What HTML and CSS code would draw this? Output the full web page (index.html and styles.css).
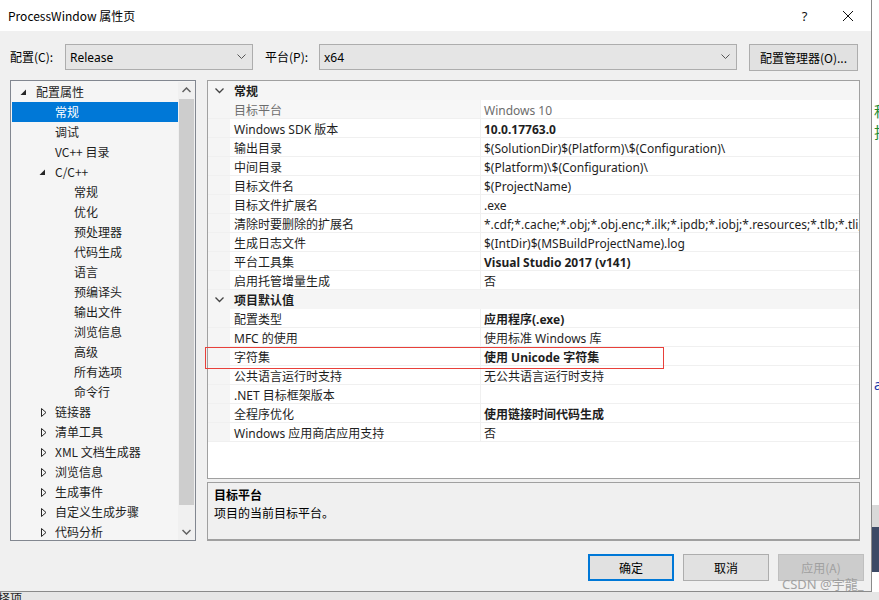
FILE: index.html
```html
<!DOCTYPE html>
<html lang="zh-CN">
<head>
<meta charset="utf-8">
<title>ProcessWindow 属性页</title>
<link rel="stylesheet" href="styles.css">
</head>
<body>
<div class="screen">
  <div class="backdrop">
    <span class="bg-green g1">程</span>
    <span class="bg-green g2">担</span>
    <span class="bg-blue b1">an</span>
    <div class="bg-band band-gray"></div>
    <div class="bg-band band-navy"></div>
    <div class="bg-bottom"><span class="bg-bottom-text">择项</span></div>
  </div>

  <div class="dialog">
    <div class="titlebar">
      <span class="title">ProcessWindow 属性页</span>
      <span class="title-btn help">?</span>
      <span class="title-btn close">
        <svg width="12" height="12" viewBox="0 0 12 12"><path d="M1 1 L11 11 M11 1 L1 11" stroke="#111" stroke-width="1" fill="none"/></svg>
      </span>
    </div>

    <div class="toolbar">
      <span class="lbl lbl-config">配置(C):</span>
      <div class="combo combo-config"><span>Release</span>
        <svg class="combo-arrow" width="9" height="6" viewBox="0 0 9 6"><path d="M0.5 0.5 L4.5 4.5 L8.5 0.5" stroke="#555" fill="none"/></svg>
      </div>
      <span class="lbl lbl-platform">平台(P):</span>
      <div class="combo combo-platform"><span>x64</span>
        <svg class="combo-arrow" width="9" height="6" viewBox="0 0 9 6"><path d="M0.5 0.5 L4.5 4.5 L8.5 0.5" stroke="#555" fill="none"/></svg>
      </div>
      <div class="btn btn-manager">配置管理器(O)...</div>
    </div>

    <div class="main">
      <div class="tree">
        <div class="tree-rows">
          <div class="trow l0"><svg class="exp" width="7" height="7" viewBox="0 0 7 7"><polygon points="6,0.5 6,6 0.5,6" fill="#262626"/></svg>配置属性</div>
          <div class="trow l1 sel">常规</div>
          <div class="trow l1">调试</div>
          <div class="trow l1">VC++ 目录</div>
          <div class="trow l1"><svg class="exp" width="7" height="7" viewBox="0 0 7 7"><polygon points="6,0.5 6,6 0.5,6" fill="#262626"/></svg>C/C++</div>
          <div class="trow l2">常规</div>
          <div class="trow l2">优化</div>
          <div class="trow l2">预处理器</div>
          <div class="trow l2">代码生成</div>
          <div class="trow l2">语言</div>
          <div class="trow l2">预编译头</div>
          <div class="trow l2">输出文件</div>
          <div class="trow l2">浏览信息</div>
          <div class="trow l2">高级</div>
          <div class="trow l2">所有选项</div>
          <div class="trow l2">命令行</div>
          <div class="trow l1"><svg class="col" width="6" height="9" viewBox="0 0 6 9"><polygon points="0.5,0.5 5,4.5 0.5,8.5" fill="none" stroke="#262626"/></svg>链接器</div>
          <div class="trow l1"><svg class="col" width="6" height="9" viewBox="0 0 6 9"><polygon points="0.5,0.5 5,4.5 0.5,8.5" fill="none" stroke="#262626"/></svg>清单工具</div>
          <div class="trow l1"><svg class="col" width="6" height="9" viewBox="0 0 6 9"><polygon points="0.5,0.5 5,4.5 0.5,8.5" fill="none" stroke="#262626"/></svg>XML 文档生成器</div>
          <div class="trow l1"><svg class="col" width="6" height="9" viewBox="0 0 6 9"><polygon points="0.5,0.5 5,4.5 0.5,8.5" fill="none" stroke="#262626"/></svg>浏览信息</div>
          <div class="trow l1"><svg class="col" width="6" height="9" viewBox="0 0 6 9"><polygon points="0.5,0.5 5,4.5 0.5,8.5" fill="none" stroke="#262626"/></svg>生成事件</div>
          <div class="trow l1"><svg class="col" width="6" height="9" viewBox="0 0 6 9"><polygon points="0.5,0.5 5,4.5 0.5,8.5" fill="none" stroke="#262626"/></svg>自定义生成步骤</div>
          <div class="trow l1"><svg class="col" width="6" height="9" viewBox="0 0 6 9"><polygon points="0.5,0.5 5,4.5 0.5,8.5" fill="none" stroke="#262626"/></svg>代码分析</div>
        </div>
        <div class="vscroll">
          <div class="sarrow"><svg width="9" height="6" viewBox="0 0 9 6"><path d="M0.5 5 L4.5 1 L8.5 5" stroke="#606060" stroke-width="1.5" fill="none"/></svg></div>
          <div class="strack"><div class="sthumb"></div></div>
          <div class="sarrow"><svg width="9" height="6" viewBox="0 0 9 6"><path d="M0.5 1 L4.5 5 L8.5 1" stroke="#606060" stroke-width="1.5" fill="none"/></svg></div>
        </div>
      </div>

      <div class="right">
        <div class="grid">
          <div class="grow head"><div class="gut"><svg width="9" height="6" viewBox="0 0 9 6"><path d="M0.5 0.5 L4.5 4.5 L8.5 0.5" stroke="#444" stroke-width="1.3" fill="none"/></svg></div><div class="hname">常规</div></div>
          <div class="grow ro"><div class="gut"></div><div class="name">目标平台</div><div class="val">Windows 10</div></div>
          <div class="grow"><div class="gut"></div><div class="name">Windows SDK 版本</div><div class="val b">10.0.17763.0</div></div>
          <div class="grow"><div class="gut"></div><div class="name">输出目录</div><div class="val">$(SolutionDir)$(Platform)\$(Configuration)\</div></div>
          <div class="grow"><div class="gut"></div><div class="name">中间目录</div><div class="val">$(Platform)\$(Configuration)\</div></div>
          <div class="grow"><div class="gut"></div><div class="name">目标文件名</div><div class="val">$(ProjectName)</div></div>
          <div class="grow"><div class="gut"></div><div class="name">目标文件扩展名</div><div class="val">.exe</div></div>
          <div class="grow"><div class="gut"></div><div class="name">清除时要删除的扩展名</div><div class="val">*.cdf;*.cache;*.obj;*.obj.enc;*.ilk;*.ipdb;*.iobj;*.resources;*.tlb;*.tli;*.tlh;*.tmp;*.rsp</div></div>
          <div class="grow"><div class="gut"></div><div class="name">生成日志文件</div><div class="val">$(IntDir)$(MSBuildProjectName).log</div></div>
          <div class="grow"><div class="gut"></div><div class="name">平台工具集</div><div class="val b">Visual Studio 2017 (v141)</div></div>
          <div class="grow"><div class="gut"></div><div class="name">启用托管增量生成</div><div class="val">否</div></div>
          <div class="grow head"><div class="gut"><svg width="9" height="6" viewBox="0 0 9 6"><path d="M0.5 0.5 L4.5 4.5 L8.5 0.5" stroke="#444" stroke-width="1.3" fill="none"/></svg></div><div class="hname">项目默认值</div></div>
          <div class="grow"><div class="gut"></div><div class="name">配置类型</div><div class="val b">应用程序(.exe)</div></div>
          <div class="grow"><div class="gut"></div><div class="name">MFC 的使用</div><div class="val">使用标准 Windows 库</div></div>
          <div class="grow"><div class="gut"></div><div class="name">字符集</div><div class="val b">使用 Unicode 字符集</div></div>
          <div class="grow"><div class="gut"></div><div class="name">公共语言运行时支持</div><div class="val">无公共语言运行时支持</div></div>
          <div class="grow"><div class="gut"></div><div class="name">.NET 目标框架版本</div><div class="val"></div></div>
          <div class="grow"><div class="gut"></div><div class="name">全程序优化</div><div class="val b">使用链接时间代码生成</div></div>
          <div class="grow"><div class="gut"></div><div class="name">Windows 应用商店应用支持</div><div class="val">否</div></div>
        </div>
        <div class="desc">
          <div class="desc-title">目标平台</div>
          <div class="desc-text">项目的当前目标平台。</div>
        </div>
      </div>
    </div>

    <div class="footer">
      <div class="btn fbtn ok">确定</div>
      <div class="btn fbtn">取消</div>
      <div class="btn fbtn disabled">应用(A)</div>
    </div>
  </div>

  <div class="highlight"></div>
  <div class="watermark">CSDN @宇龍_</div>
</div>
</body>
</html>
```

FILE: styles.css
```css
* { box-sizing: border-box; }
html, body { margin: 0; padding: 0; }
body {
  background: #ffffff;
  font-family: "Noto Sans", "Noto Sans CJK SC", sans-serif;
  font-size: 12px;
  color: #1e1e1e;
}
.screen {
  position: relative;
  width: 879px;
  height: 600px;
  overflow: hidden;
  background: #ffffff;
}

/* background behind the dialog */
.backdrop { position: absolute; inset: 0; }
.bg-green { position: absolute; left: 874px; color: #1a8a2e; font-size: 15px; font-family: "Noto Sans CJK SC", sans-serif; }
.g1 { top: 100px; }
.g2 { top: 121px; }
.bg-blue { position: absolute; left: 874px; top: 375px; color: #1a3aa8; font-size: 14px; }
.bg-band { position: absolute; left: 871px; width: 8px; }
.band-gray { top: 505px; height: 22px; background: #d9d9d9; }
.band-navy { top: 527px; height: 45px; background: #3c4a66; }
.bg-bottom { position: absolute; left: 0; top: 592px; width: 879px; height: 8px; background: #e6e6e6; overflow: hidden; }
.bg-bottom-text { position: absolute; left: -2px; top: -3px; font-size: 12px; font-family: "Noto Sans CJK SC", sans-serif; color: #222; }

.dialog {
  position: relative;
  width: 872px;
  height: 592px;
  background: #f0f0f0;
  border-right: 1px solid #8a8a8a;
  border-bottom: 1px solid #8a8a8a;
  display: flex;
  flex-direction: column;
  font-family: "Noto Sans CJK SC", sans-serif;
}

.titlebar {
  height: 31px;
  background: #ffffff;
  display: flex;
  align-items: center;
  padding-left: 8px;
  flex: none;
}
.title { font-size: 12px; color: #000; flex: 1; }
.title-btn { width: 46px; display: flex; justify-content: center; font-size: 13px; color: #111; }
.help { font-family: "Noto Sans", sans-serif; padding-left: 5px; }

.toolbar {
  height: 49px;
  display: flex;
  align-items: flex-start;
  padding: 13px 0 0 10px;
  flex: none;
}
.lbl { height: 26px; line-height: 26px; font-size: 12px; color: #000; }
.lbl-config { width: 55px; }
.lbl-platform { width: 54px; margin-left: 12px; }
.combo {
  height: 26px;
  border: 1px solid #adadad;
  background: #e5e5e5;
  display: flex;
  align-items: center;
  justify-content: space-between;
  padding: 0 6px 0 4px;
  font-family: "Noto Sans", sans-serif;
  font-size: 12px;
  color: #000;
}
.combo-config { width: 188px; }
.combo-platform { width: 418px; }
.btn {
  border: 1px solid #adadad;
  background: #e1e1e1;
  display: flex;
  align-items: center;
  justify-content: center;
  font-size: 12px;
  color: #000;
}
.btn-manager { width: 109px; height: 27px; margin-left: 12px; }

.main {
  display: flex;
  height: 461px;
  padding-left: 10px;
  flex: none;
}

/* tree */
.tree {
  width: 186px;
  height: 461px;
  border: 1px solid #828790;
  background: #f5f5f5;
  display: flex;
  padding: 1px 0 0 1px;
}
.tree-rows { width: 166px; }
.trow {
  height: 20px;
  line-height: 20px;
  position: relative;
  font-size: 12px;
  color: #1e1e1e;
  white-space: nowrap;
}
.trow.l0 { padding-left: 24px; }
.trow.l1 { padding-left: 43px; }
.trow.l2 { padding-left: 62px; }
.trow.sel { background: #0078d7; color: #fff; }
.exp, .col { position: absolute; top: 7px; }
.l0 .exp { left: 8px; }
.l1 .exp { left: 27px; }
.l1 .col { left: 29px; top: 6px; }
.vscroll {
  width: 17px;
  display: flex;
  flex-direction: column;
  background: #f0f0f0;
  height: 458px;
}
.sarrow { height: 16px; display: flex; align-items: center; justify-content: center; }
.strack { flex: 1; padding: 1px 1px; }
.sthumb { height: 406px; background: #cdcdcd; margin-top: 0; }

/* right side */
.right {
  margin-left: 11px;
  width: 653px;
  display: flex;
  flex-direction: column;
  gap: 3px;
}
.grid {
  height: 399px;
  border: 1px solid #a0a0a0;
  background: #ffffff;
  overflow: hidden;
  font-family: "Noto Sans", "Noto Sans CJK SC", sans-serif;
}
.grow {
  display: flex;
  height: 19px;
  border-bottom: 1px solid #f0f0f0;
  font-size: 12px;
  line-height: 21px;
  white-space: nowrap;
}
.gut {
  width: 22px;
  flex: none;
  background: #f5f5f5;
  display: flex;
  align-items: center;
  justify-content: center;
  padding-top: 2px;
}
.name {
  width: 251px;
  flex: none;
  padding-left: 4px;
  border-right: 1px solid #f0f0f0;
  overflow: hidden;
}
.val {
  flex: 1;
  padding-left: 3px;
  overflow: hidden;
}
.val.b { font-weight: bold; }
.grow.ro .name { background: #f7f7f7; color: #6d6d6d; }
.grow.ro .val { color: #6d6d6d; }
.grow.head { background: #f5f5f5; border-bottom-color: #f5f5f5; }
.hname { padding-left: 4px; font-weight: bold; }

.desc {
  height: 59px;
  border: 1px solid #a0a0a0;
  border-bottom-width: 2px;
  background: #f0f0f0;
  padding: 3px 6px;
  font-size: 12px;
  color: #000;
}
.desc-title { font-weight: bold; line-height: 18px; }
.desc-text { line-height: 18px; }

.footer {
  display: flex;
  justify-content: flex-end;
  gap: 9px;
  padding: 13px 7px 0 0;
}
.fbtn { width: 86px; height: 27px; }
.fbtn.ok { border: 2px solid #0078d7; }
.fbtn.disabled { color: #a0a0a0; background: #cccccc; border-color: #bfbfbf; }

/* overlays */
.highlight {
  position: absolute;
  left: 205px;
  top: 347px;
  width: 459px;
  height: 22px;
  border: 1px solid #e8403a;
}
.watermark {
  position: absolute;
  left: 782px;
  top: 574px;
  font-size: 13px;
  color: #9a9a9a;
  font-family: "Noto Sans", "Noto Sans CJK SC", sans-serif;
  opacity: 0.9;
}
```
